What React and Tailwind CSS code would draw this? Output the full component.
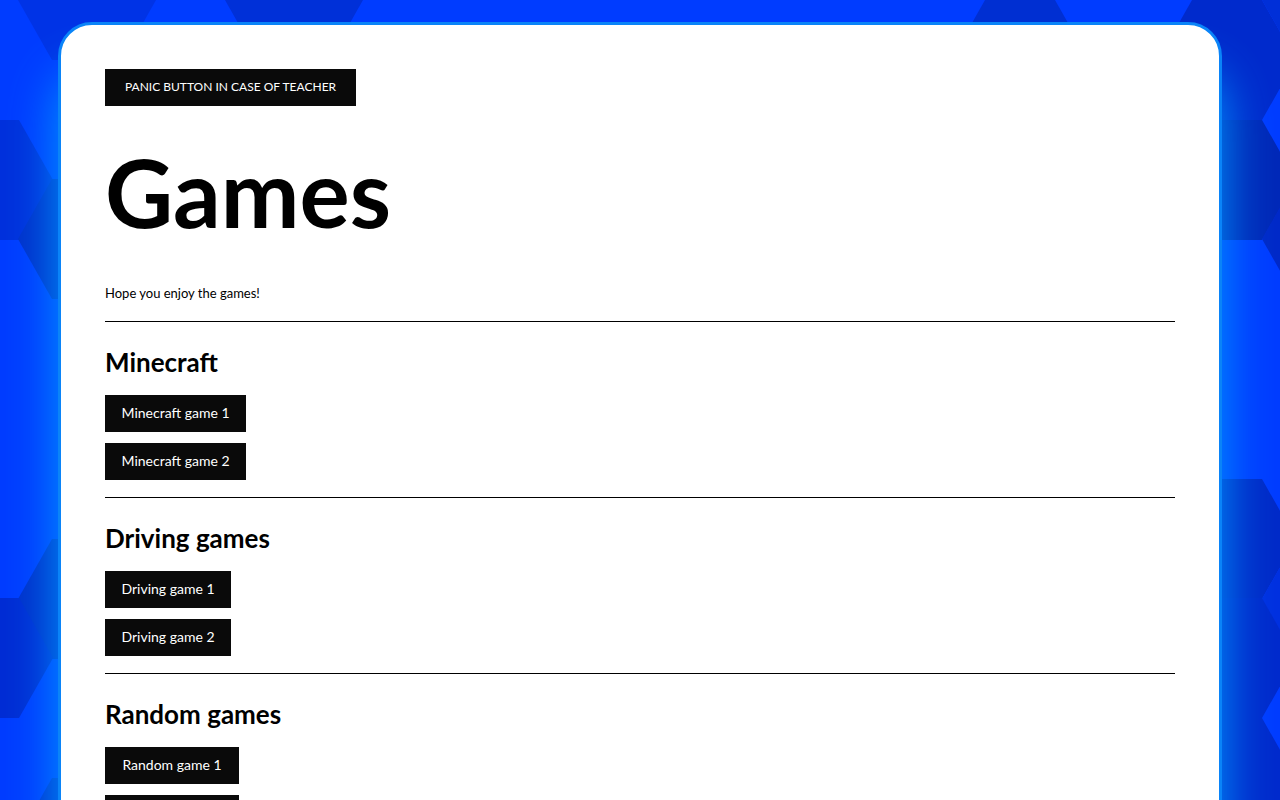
import React from 'react';

const sections = [
  { title: 'Minecraft', games: ['Minecraft game 1', 'Minecraft game 2'], width: 'w-[141px]' },
  { title: 'Driving games', games: ['Driving game 1', 'Driving game 2'], width: 'w-[126px]' },
  { title: 'Random games', games: ['Random game 1', 'Random game 2'], width: 'w-[134px]' },
];

// center x, center y, color
const hexagons = [
  [87, 0, '#0033e6'],
  [294, 0, '#0030d8'],
  [1020, 60, '#002fd2'],
  [1227, 60, '#002acc'],
  [1331, 0, '#002fd8'],
  [1227, 180, '#0028b8'],
  [1331, 239, '#0029c8'],
  [1227, 539, '#002ac8'],
  [1331, 599, '#0030e0'],
  [1227, 658, '#002acc'],
  [1227, 778, '#002acc'],
  [-16, 180, '#0030dc'],
  [87, 239, '#0030cc'],
  [87, 599, '#0030cc'],
  [-16, 658, '#002cd4'],
  [87, 838, '#0033d4'],
];

const Hexagon = ({ x, y, fill }) => (
  <polygon
    points={`${x - 69},${y} ${x - 35},${y - 60} ${x + 35},${y - 60} ${x + 69},${y} ${x + 35},${y + 60} ${x - 35},${y + 60}`}
    fill={fill}
  />
);

const GameButton = ({ children, className }) => (
  <button
    type="button"
    className={`h-[37px] whitespace-nowrap bg-[#0a0a0a] pb-0.5 text-center text-white ${className}`}
  >
    {children}
  </button>
);

const App = () => {
  return (
    <div className="relative min-h-screen overflow-hidden bg-[#003cff] px-[58px] pt-[22px] pb-16 font-['Lato',sans-serif] text-black">
      <svg
        className="absolute inset-x-0 top-0 h-screen w-full"
        viewBox="0 0 1280 800"
        preserveAspectRatio="xMidYMid slice"
        aria-hidden="true"
      >
        {hexagons.map(([x, y, fill]) => (
          <Hexagon key={`${x}-${y}`} x={x} y={y} fill={fill} />
        ))}
      </svg>

      <main className="relative rounded-[34px] border-3 border-[#0a84f8] bg-white px-11 py-11 shadow-[0_50px_50px_#009cff]">
        <GameButton className="w-[251px] text-xs">PANIC BUTTON IN CASE OF TEACHER</GameButton>

        <h1 className="mt-7 text-[94px] leading-[116px] font-bold">Games</h1>

        <p className="mt-8 mb-[17px] text-[13px] leading-[22px]">Hope you enjoy the games!</p>

        {sections.map(({ title, games, width }) => (
          <section key={title} className="border-t border-black pb-[17px]">
            <h2 className="pt-5 pb-[13px] text-[26px] leading-10 font-bold">{title}</h2>
            <div className="flex flex-col items-start gap-[11px]">
              {games.map((game) => (
                <GameButton key={game} className={`text-sm ${width}`}>{game}</GameButton>
              ))}
            </div>
          </section>
        ))}
      </main>
    </div>
  );
};

export default App;
